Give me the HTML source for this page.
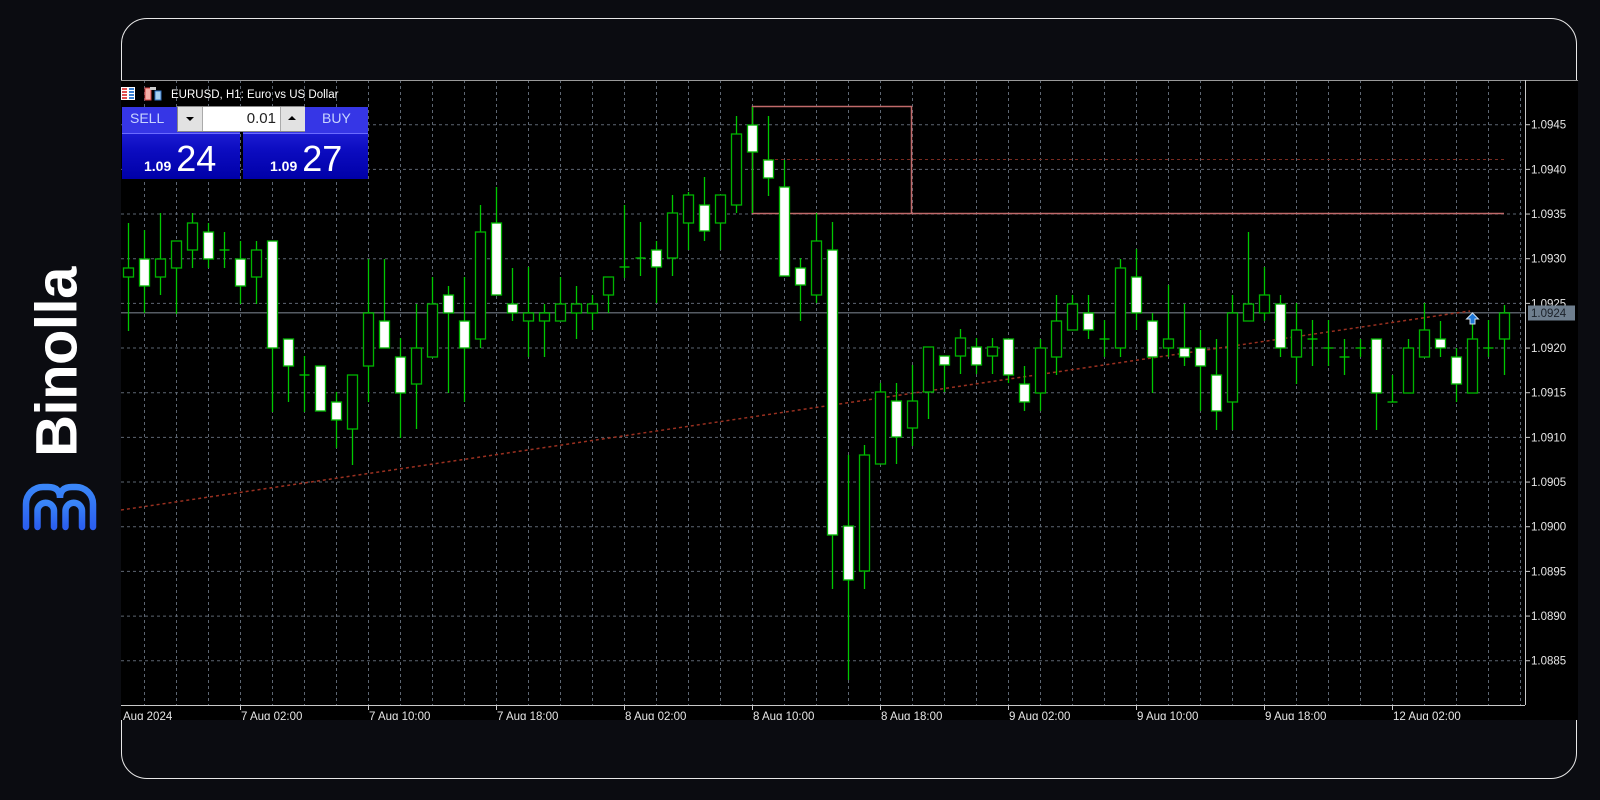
<!DOCTYPE html>
<html><head><meta charset="utf-8">
<style>
html,body{margin:0;padding:0;background:#0b0c11;width:1600px;height:800px;overflow:hidden}
#frame{position:absolute;left:121px;top:18px;width:1456px;height:761px;border:1.5px solid #e8e8e8;border-radius:26px;box-sizing:border-box}
#chart{position:absolute;left:121px;top:80px;width:1457px;height:640px;background:#000;overflow:hidden}
svg text{font-family:"Liberation Sans",sans-serif}
#logo{position:absolute;left:57px;top:362px;transform:translate(-50%,-50%) rotate(-90deg);color:#fff;font:bold 58px "Liberation Sans",sans-serif;letter-spacing:-0.5px;white-space:nowrap}
.px{position:absolute;top:138px;display:flex;align-items:baseline;color:#fff;white-space:nowrap}
.px b{font:bold 14px 'Liberation Sans',sans-serif}
.px span{font:36px 'Liberation Sans',sans-serif;margin-left:5px}
</style></head><body>
<div id="frame"></div>
<div id="logo">Binolla</div>
<svg style="position:absolute;left:0;top:0" width="120" height="560">
<defs><linearGradient id="g" x1="0" y1="0" x2="0" y2="1"><stop offset="0" stop-color="#3a86f8"/><stop offset="1" stop-color="#2b5ff0"/></linearGradient></defs>
<g fill="none" stroke="url(#g)" stroke-width="6.5" stroke-linecap="round">
<path d="M26,527 V504 A17,17 0 0 1 43,487 H48 Q60,487 60,498 Q60,487 72,487 H76 A17,17 0 0 1 93,504 V527"/>
<path d="M37.5,527 V511 A8.25,8.25 0 0 1 54,511 V527"/>
<path d="M65.5,527 V511 A8.25,8.25 0 0 1 82,511 V527"/>
</g></svg>
<div id="chart"><svg id="s" width="1457" height="640"></svg></div>
<script>
var ox=121,oy=80,h='';
function X(x){return x-ox} function Y(y){return y-oy}
for(var i=-1;i<=13;i++){var y=124.7+i*44.67;if(y<82||y>704)continue;h+='<line x1="0" x2="'+X(1525)+'" y1="'+Y(y)+'" y2="'+Y(y)+'" stroke="#5d6672" stroke-dasharray="3,3"/>';}
for(var x=144;x<1525;x+=32){h+='<line x1="'+X(x+.5)+'" x2="'+X(x+.5)+'" y1="0" y2="'+Y(705)+'" stroke="#5d6672" stroke-dasharray="3,3"/>';}
h+='<line x1="0" x2="1457" y1="0.5" y2="0.5" stroke="#9a9a9a"/>';
h+='<line x1="0" x2="'+X(1525)+'" y1="'+Y(705.5)+'" y2="'+Y(705.5)+'" stroke="#c8c8c8"/>';
h+='<line x1="'+X(1525.5)+'" x2="'+X(1525.5)+'" y1="0" y2="'+Y(705)+'" stroke="#c8c8c8"/>';
h+='<line x1="0" x2="'+X(1525)+'" y1="'+Y(312.7)+'" y2="'+Y(312.7)+'" stroke="#555b63" stroke-width="1.5"/>';
h+='<line x1="0" y1="'+Y(510)+'" x2="'+X(1470)+'" y2="'+Y(311)+'" stroke="#9a3020" stroke-width="1.5" stroke-dasharray="3,3"/>';
h+='<path d="M'+X(752.5)+','+Y(213.5)+' V'+Y(106.5)+' H'+X(911.5)+' V'+Y(213.5)+'" fill="none" stroke="#c06a6a" stroke-width="1.5"/>';
h+='<line x1="'+X(752)+'" x2="'+X(1504)+'" y1="'+Y(213.5)+'" y2="'+Y(213.5)+'" stroke="#c06a6a" stroke-width="1.5"/>';
h+='<line x1="'+X(763)+'" x2="'+X(1504)+'" y1="'+Y(159.5)+'" y2="'+Y(159.5)+'" stroke="#7a2a20" stroke-dasharray="3,3"/>';
var d=[
[0,'b',268,277,223,331],[1,'w',259,286,230,313],[2,'b',259,277,213,295],[3,'b',241,268,241,314],[4,'b',223,250,213,268],
[5,'w',232,259,223,268],[6,'c',250,250,232,268],[7,'w',259,286,241,304],[8,'b',250,277,241,304],[9,'w',241,348,241,412],
[10,'w',339,366,339,402],[11,'c',375,375,356,412],[12,'w',366,411,366,411],[13,'w',402,420,392,448],[14,'b',375,429,375,465],
[15,'b',313,366,259,402],[16,'w',321,348,259,348],[17,'w',357,393,338,438],[18,'b',348,384,304,429],[19,'b',304,357,277,357],
[20,'w',295,313,286,393],[21,'w',321,348,277,402],[22,'b',232,339,205,348],[23,'w',223,295,187,295],[24,'w',304,313,268,321],
[25,'b',313,321,267,357],[26,'b',313,321,304,357],[27,'b',304,321,277,321],[28,'b',304,313,286,339],[29,'b',304,313,295,330],
[30,'b',277,295,277,313],[31,'c',267,267,205,278],[32,'c',258,258,222,276],[33,'w',250,267,241,303],[34,'b',213,258,195,276],
[35,'b',195,223,192,250],[36,'w',205,231,177,241],[37,'b',195,223,195,250],[38,'b',134,205,116,213],[39,'w',125,152,107,213],
[40,'w',160,178,116,196],[41,'w',187,276,160,276],[42,'w',268,285,258,321],[43,'b',241,295,213,303],[44,'w',250,535,222,589],
[45,'w',526,580,455,680],[46,'b',455,571,445,589],[47,'b',392,464,383,464],[48,'w',401,437,383,464],[49,'b',401,428,365,446],
[50,'b',347,392,347,419],[51,'w',356,365,356,392],[52,'b',338,356,329,374],[53,'w',347,365,338,374],[54,'b',347,356,338,374],
[55,'w',339,375,339,383],[56,'w',384,402,366,411],[57,'b',348,393,339,411],[58,'b',321,357,295,375],[59,'b',304,330,295,330],
[60,'w',313,330,295,339],[61,'c',339,339,320,357],[62,'b',268,348,259,357],[63,'w',277,313,249,330],[64,'w',321,357,313,393],
[65,'b',339,348,285,357],[66,'w',348,357,304,366],[67,'w',348,366,330,411],[68,'w',375,411,339,430],[69,'b',313,402,295,430],
[70,'b',304,321,232,321],[71,'b',295,313,267,321],[72,'w',304,348,295,357],[73,'b',330,357,303,384],[74,'c',339,339,320,366],
[75,'c',348,348,320,366],[76,'c',357,357,339,375],[77,'c',348,348,339,357],[78,'w',339,393,339,430],[79,'c',402,402,375,402],
[80,'b',348,393,339,393],[81,'b',330,357,303,357],[82,'w',339,348,321,357],[83,'w',357,384,348,402],[84,'b',339,393,321,393],
[85,'c',348,348,320,357],[86,'b',313,339,305,375]];
d.forEach(function(c){var x=X(128+16*c[0])+0.5;
h+='<line x1="'+x+'" x2="'+x+'" y1="'+Y(c[4])+'" y2="'+Y(c[5])+'" stroke="#00c800" stroke-width="1.3"/>';
if(c[1]=='c'){h+='<line x1="'+(x-5)+'" x2="'+(x+5)+'" y1="'+Y(c[2])+'" y2="'+Y(c[2])+'" stroke="#00c800" stroke-width="1.3"/>';}
else{h+='<rect x="'+(x-5)+'" y="'+Y(c[2])+'" width="10" height="'+Math.max(c[3]-c[2],2)+'" fill="'+(c[1]=='w'?'#fff':'#000')+'" stroke="#00b400" stroke-width="1.3"/>';}
});
var ax=X(1472.5),ay=Y(313);
h+='<path d="M'+ax+','+ay+' l-6,6 h3.5 v5 h5 v-5 h3.5 z" fill="#1e78d8" stroke="#cfe0f0" stroke-width="1"/>';
var pl=['1.0945','1.0940','1.0935','1.0930','1.0925','1.0920','1.0915','1.0910','1.0905','1.0900','1.0895','1.0890','1.0885'];
pl.forEach(function(p,i){var y=Y(124.7+i*44.67);h+='<line x1="'+X(1525)+'" x2="'+X(1530)+'" y1="'+y+'" y2="'+y+'" stroke="#ccc"/>';
h+='<text x="'+X(1531)+'" y="'+(y+4)+'" font-size="11.5" fill="#e6e6e6">'+p+'</text>';});
h+='<rect x="'+X(1528)+'" y="'+Y(305.5)+'" width="47" height="15" fill="#6e7e8e"/><text x="'+X(1531)+'" y="'+Y(317)+'" font-size="11.5" fill="#1a2028">1.0924</text>';
var dl=['7 Aug 02:00','7 Aug 10:00','7 Aug 18:00','8 Aug 02:00','8 Aug 10:00','8 Aug 18:00','9 Aug 02:00','9 Aug 10:00','9 Aug 18:00','12 Aug 02:00'];
h+='<text x="'+X(123)+'" y="'+Y(720)+'" font-size="11.5" fill="#e6e6e6">Aug 2024</text>';
dl.forEach(function(t,i){var x=X(240+128*i)+0.5;h+='<line x1="'+x+'" x2="'+x+'" y1="'+Y(705)+'" y2="'+Y(710)+'" stroke="#ccc"/><text x="'+(x+0.5)+'" y="'+Y(720)+'" font-size="11.5" fill="#e6e6e6">'+t+'</text>';});
h+='<g transform="translate(0,'+Y(87)+')"><rect x="0" y="0" width="14" height="13" fill="#fff"/><rect x="1" y="1" width="5" height="11" fill="#e05050"/><rect x="8" y="1" width="5" height="11" fill="#3a7fd0"/>'+
'<rect x="0" y="3" width="14" height="1" fill="#fff"/><rect x="0" y="6" width="14" height="1" fill="#fff"/><rect x="0" y="9" width="14" height="1" fill="#fff"/>'+
'<rect x="24" y="1" width="6" height="12" fill="#f4b0a8" stroke="#d04040"/><rect x="34" y="4" width="6" height="9" fill="#a8d0f0" stroke="#3070c0"/><rect x="29" y="0" width="6" height="3" fill="#ccc"/>'+
'<text x="50" y="11" font-size="11.5" fill="#fff">EURUSD, H1:  Euro vs US Dollar</text></g>';
document.getElementById('s').innerHTML=h;
</script>
<div style="position:absolute;left:122px;top:107px;width:118px;height:72px;background:linear-gradient(#3333ee,#0c0cc0 60%,#0000a8)"></div>
<div style="position:absolute;left:243px;top:107px;width:125px;height:72px;background:linear-gradient(#3333ee,#0c0cc0 60%,#0000a8)"></div>
<div style="position:absolute;left:122px;top:107px;width:118px;height:26px;background:#3636e6;border-bottom:1px solid #6b6bff"></div>
<div style="position:absolute;left:243px;top:107px;width:125px;height:26px;background:#3636e6;border-bottom:1px solid #6b6bff"></div>
<div style="position:absolute;left:130px;top:110px;font:14px 'Liberation Sans',sans-serif;color:#c8d4ff">SELL</div>
<div style="position:absolute;left:322px;top:110px;font:14px 'Liberation Sans',sans-serif;color:#c8d4ff">BUY</div>
<div style="position:absolute;left:177px;top:106px;width:128px;height:26px;background:#fff;border:1px solid #888;box-sizing:border-box"></div>
<div style="position:absolute;left:178px;top:107px;width:24px;height:24px;background:#e2e2e2;border-right:1px solid #aaa"></div>
<div style="position:absolute;left:280px;top:107px;width:24px;height:24px;background:#e2e2e2;border-left:1px solid #aaa"></div>
<div style="position:absolute;left:186px;top:117px;width:0;height:0;border-left:4px solid transparent;border-right:4px solid transparent;border-top:4px solid #000"></div>
<div style="position:absolute;left:288px;top:116px;width:0;height:0;border-left:4px solid transparent;border-right:4px solid transparent;border-bottom:4px solid #000"></div>
<div style="position:absolute;left:210px;top:110px;width:66px;text-align:right;font:15px 'Liberation Sans',sans-serif;color:#222">0.01</div>
<div class="px" style="left:144px"><b>1.09</b><span>24</span></div>
<div class="px" style="left:270px"><b>1.09</b><span>27</span></div>
</body></html>
